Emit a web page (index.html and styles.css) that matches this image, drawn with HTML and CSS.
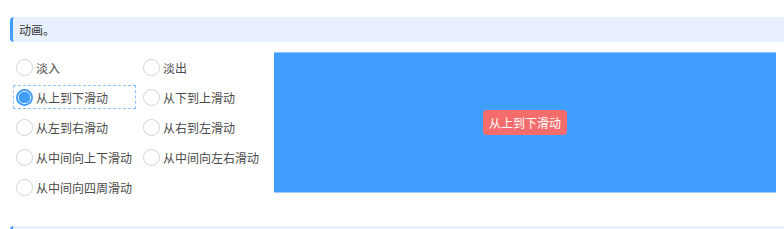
FILE: index.html
```html
<!DOCTYPE html>
<html lang="zh-CN">
<head>
  <meta charset="UTF-8" />
  <title>动画</title>
  <link rel="stylesheet" href="styles.css">
</head>
<body>

  <div class="page">
    <div class="section">
      <div class="title">动画。</div>

      <div class="demo">
        <div class="options">
          <label class="option"><span class="radio"></span>淡入</label>
          <label class="option"><span class="radio"></span>淡出</label>
          <label class="option checked"><span class="radio"></span>从上到下滑动</label>
          <label class="option"><span class="radio"></span>从下到上滑动</label>
          <label class="option"><span class="radio"></span>从左到右滑动</label>
          <label class="option"><span class="radio"></span>从右到左滑动</label>
          <label class="option"><span class="radio"></span>从中间向上下滑动</label>
          <label class="option"><span class="radio"></span>从中间向左右滑动</label>
          <label class="option"><span class="radio"></span>从中间向四周滑动</label>
        </div>

        <div class="stage">
          <span class="tag">从上到下滑动</span>
        </div>
      </div>
    </div>

    <div class="section">
      <div class="title">&nbsp;</div>
    </div>
  </div>

</body>
</html>
```

FILE: styles.css
```css
body {
  margin: 0;
  font-family: "Noto Sans CJK SC", "Noto Sans", sans-serif;
  font-size: 12px;
  color: #4a4a4a;
  background: #fff;
}

.page {
  padding: 17px 8px 0 10px;
}

.section {
  margin-bottom: 27px;
}

.title {
  height: 25px;
  line-height: 25px;
  padding-left: 6px;
  background: #e9f0fd;
  border-left: 3px solid #409eff;
  border-radius: 4px 0 0 4px;
  color: #333;
  margin-right: -8px;
}

.demo {
  display: flex;
  margin-top: 10px;
}

.options {
  width: 261px;
  padding: 3px 0 0 3px;
  display: grid;
  grid-template-columns: 127px 127px;
  grid-auto-rows: 24px;
  row-gap: 6px;
  align-content: start;
}

.option {
  display: flex;
  align-items: center;
  gap: 3px;
  padding-left: 2px;
  border: 1px dashed transparent;
  white-space: nowrap;
  cursor: pointer;
}

.option.checked {
  border-color: #8cc5ff;
  width: 119px;
}

.radio {
  width: 17px;
  height: 17px;
  box-sizing: border-box;
  border: 1px solid #d4d4d4;
  border-radius: 50%;
  background: #fff;
  flex: none;
}

.checked .radio {
  border: 2px solid #409eff;
  background: radial-gradient(circle, #409eff 0 5.5px, #fff 6px);
}

.stage {
  flex: 1;
  height: 139px;
  background: #409eff;
  border-top: 1px solid #8cc5ff;
  border-bottom: 1px solid #a0cfff;
  display: flex;
  align-items: center;
  justify-content: center;
}

.tag {
  height: 25px;
  line-height: 25px;
  padding: 0 6px;
  border-radius: 4px;
  background: #f56c6c;
  color: #fff;
}
```
